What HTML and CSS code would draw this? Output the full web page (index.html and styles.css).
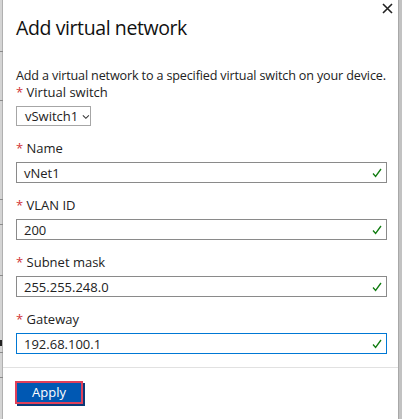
FILE: index.html
```html
<!DOCTYPE html>
<html>
<head>
<meta charset="utf-8">
<link rel="stylesheet" href="styles.css">
</head>
<body>
<div class="page">
  <div class="backdrop">
    <span class="tick t1"></span><span class="tick t2"></span><span class="tick t3"></span>
    <span class="tick t4"></span><span class="tick t5"></span><span class="tick t6"></span>
    <span class="tick t7"></span><span class="frag"></span>
  </div>
  <div class="panel">
    <div class="header">
      <h1 class="title">Add virtual network</h1>
      <svg class="close" width="11" height="11" viewBox="0 0 11 11"><path d="M1 1 L10 10 M10 1 L1 10" fill="none" stroke="#222" stroke-width="1.6"/></svg>
    </div>
    <div class="body">
      <p class="desc">Add a virtual network to a specified virtual switch on your device.</p>
      <div class="label"><span class="req">*</span> Virtual switch</div>
      <div class="select">vSwitch1
        <svg class="chev" width="9" height="6" viewBox="0 0 9 6"><path d="M1 1 L4.5 4.5 L8 1" fill="none" stroke="#333" stroke-width="1.2"/></svg>
      </div>

      <div class="field">
        <div class="label"><span class="req">*</span> Name</div>
        <div class="input"><span>vNet1</span><svg class="check" width="10" height="10" viewBox="0 0 10 10"><path d="M1 5.5 L3.6 8.5 L9 1" fill="none" stroke="#107c10" stroke-width="1.3"/></svg></div>
      </div>
      <div class="field">
        <div class="label"><span class="req">*</span> VLAN ID</div>
        <div class="input"><span>200</span><svg class="check" width="10" height="10" viewBox="0 0 10 10"><path d="M1 5.5 L3.6 8.5 L9 1" fill="none" stroke="#107c10" stroke-width="1.3"/></svg></div>
      </div>
      <div class="field">
        <div class="label"><span class="req">*</span> Subnet mask</div>
        <div class="input"><span>255.255.248.0</span><svg class="check" width="10" height="10" viewBox="0 0 10 10"><path d="M1 5.5 L3.6 8.5 L9 1" fill="none" stroke="#107c10" stroke-width="1.3"/></svg></div>
      </div>
      <div class="field">
        <div class="label"><span class="req">*</span> Gateway</div>
        <div class="input focus"><span>192.68.100.1</span><svg class="check" width="10" height="10" viewBox="0 0 10 10"><path d="M1 5.5 L3.6 8.5 L9 1" fill="none" stroke="#107c10" stroke-width="1.3"/></svg></div>
      </div>
    </div>
    <div class="footer">
      <button class="apply">Apply</button>
    </div>
  </div>
  <div class="edge"></div>
</div>
</body>
</html>
```

FILE: styles.css
```css
* { box-sizing: border-box; }
html, body { margin: 0; padding: 0; background: #fff; }
body {
  font-family: "Open Sans", "Noto Sans", sans-serif;
  color: #222;
  width: 402px;
  height: 419px;
  overflow: hidden;
}
.page {
  display: flex;
  height: 419px;
}
.backdrop {
  width: 3px;
  background: #d4d4d4;
  border-right: 1px solid #b0b0b0;
  position: relative;
  flex: none;
}
.tick {
  position: absolute;
  left: 0;
  width: 3px;
  height: 1px;
  background: #8a8a8a;
}
.t1 { top: 51px; }
.t2 { top: 100px; }
.t3 { top: 199px; }
.t4 { top: 224px; }
.t5 { top: 275px; }
.t6 { top: 352px; }
.t7 { top: 377px; }
.frag {
  position: absolute;
  left: 0;
  top: 340px;
  width: 2px;
  height: 6px;
  background: #222;
}
.panel {
  flex: 1;
  display: flex;
  flex-direction: column;
  background: #fff;
}
.edge {
  width: 4px;
  flex: none;
  background: #c2c2c2;
  border-left: 1px solid #a8a8a8;
}
.header {
  position: relative;
  padding: 14px 0 0 13px;
  height: 60px;
}
.title {
  margin: 0;
  font-weight: 400;
  font-size: 19.5px;
  line-height: 28px;
  color: #111;
  letter-spacing: -0.4px;
}
.close {
  position: absolute;
  right: 5px;
  top: 3px;
}
.body {
  padding: 7px 11px 13px 13px;
}
.desc {
  margin: 0;
  font-size: 12.6px;
  line-height: 17px;
  color: #222;
  white-space: nowrap;
  letter-spacing: -0.15px;
}
.label {
  font-size: 13px;
  line-height: 17px;
  color: #222;
}
.req { color: #d13438; }
.select {
  margin-top: 5px;
  width: 75px;
  height: 20px;
  border: 1px solid #a6a6a6;
  font-size: 13px;
  line-height: 18px;
  padding-left: 8px;
  display: flex;
  align-items: center;
  gap: 4px;
}
.chev { margin-top: 1px; }
.field { margin-top: 14px; }
.input {
  margin-top: 5px;
  height: 21px;
  border: 1px solid #8a8a8a;
  display: flex;
  align-items: center;
  justify-content: space-between;
  padding: 0 4px 0 7px;
  font-size: 13px;
}
.input.focus { border-color: #0078d4; }
.footer {
  border-top: 1px solid #e1e1e1;
  flex: 1;
  padding: 12px 0 0 12px;
}
.apply {
  width: 68px;
  height: 23px;
  background: #0058b3;
  color: #fff;
  border: 2px solid #e0405a;
  box-shadow: 2px 2px 0 #0a3a7a;
  font-family: "Open Sans", "Noto Sans", sans-serif;
  font-size: 13px;
  line-height: 17px;
  padding: 0;
}
```
